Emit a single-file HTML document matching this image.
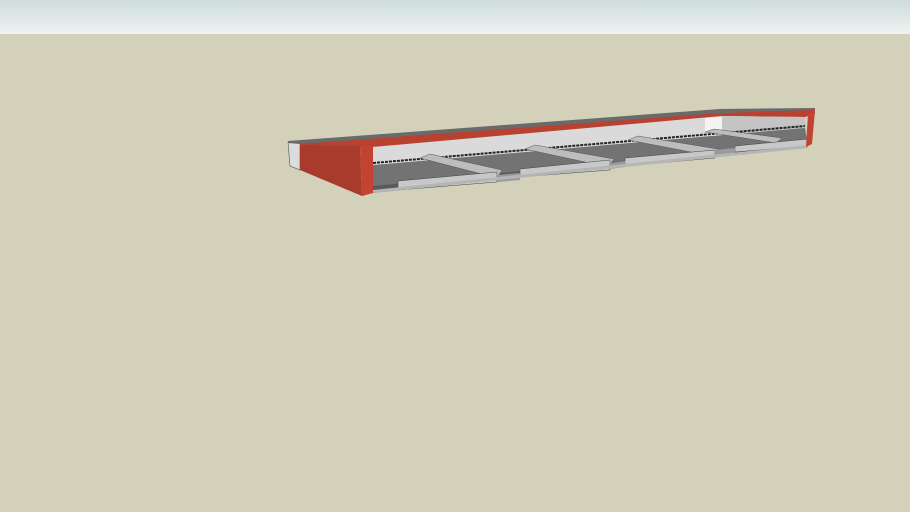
<!DOCTYPE html>
<html><head><meta charset="utf-8"><style>
html,body{margin:0;padding:0;width:910px;height:512px;overflow:hidden;background:#d3d1b9}
.sky{position:absolute;left:0;top:0;width:910px;height:34px;background:linear-gradient(#cedcdc,#eef2f1)}
svg{position:absolute;left:0;top:0}
</style></head><body>
<div class="sky"></div>
<svg width="910" height="512" viewBox="0 0 910 512">
<polygon points="288,142 300,143 300,170 290,166" fill="#dcdcdc" stroke="#555" stroke-width="0.6"/>
<polygon points="288,141 720,109 815,108 815,111 722,113 372,143 300,144 288,143" fill="#6a6a6a"/>
<polygon points="300,144 722,113 815,110 815,114 805,117 372,147 360,147 300,146" fill="#b8412f"/>
<polygon points="373,147 722,116 805,117 806,140 373,165" fill="#dadada"/>
<polygon points="722,116 805,117 806,140 722,135" fill="#c4c4c4"/>
<polygon points="705,118 722,117 722,135 705,136" fill="#f3f3f0"/>
<line x1="373" y1="163" x2="805" y2="126" stroke="#222" stroke-width="2" stroke-dasharray="3,1"/>
<polygon points="373,165 805,128 808,146 373,192" fill="#737373"/>
<polygon points="373,186 808,142 808,147 373,193" fill="#5a5a5a"/>
<polygon points="420,158 430,154 502,170 497,178" fill="#bdbdbd" stroke="#555" stroke-width="0.5"/>
<polygon points="525,149 535,145 614,159 608,167" fill="#bdbdbd" stroke="#555" stroke-width="0.5"/>
<polygon points="628,140 638,136 718,149 712,156" fill="#bdbdbd" stroke="#555" stroke-width="0.5"/>
<polygon points="705,132 714,129 782,138 776,143" fill="#bdbdbd" stroke="#555" stroke-width="0.5"/>
<polygon points="398,181 497,172 497,182 398,190" fill="#c8c8c8" stroke="#444" stroke-width="0.5"/>
<polygon points="520,169 610,160 610,170 520,177" fill="#c8c8c8" stroke="#444" stroke-width="0.5"/>
<polygon points="497,175 520,173 520,180 497,182" fill="#9a9a9a"/>
<polygon points="625,158 715,150 715,158 625,166" fill="#c8c8c8" stroke="#444" stroke-width="0.5"/>
<polygon points="610,163 625,161 625,167 610,169" fill="#9a9a9a"/>
<polygon points="735,146 808,139 808,146 735,152" fill="#c8c8c8" stroke="#444" stroke-width="0.5"/>
<polygon points="715,150 735,148 735,154 715,157" fill="#9a9a9a"/>
<polygon points="373,190 808,145 808,148 373,193" fill="#b5b5b5"/>
<polygon points="300,145 360,146 362,196 300,170" fill="#a93b2c"/>
<polygon points="360,146 373,146 373,193 362,196" fill="#c24331"/>
<polygon points="808,114 815,110 812,144 806,147" fill="#c24331"/>
</svg>
</body></html>
